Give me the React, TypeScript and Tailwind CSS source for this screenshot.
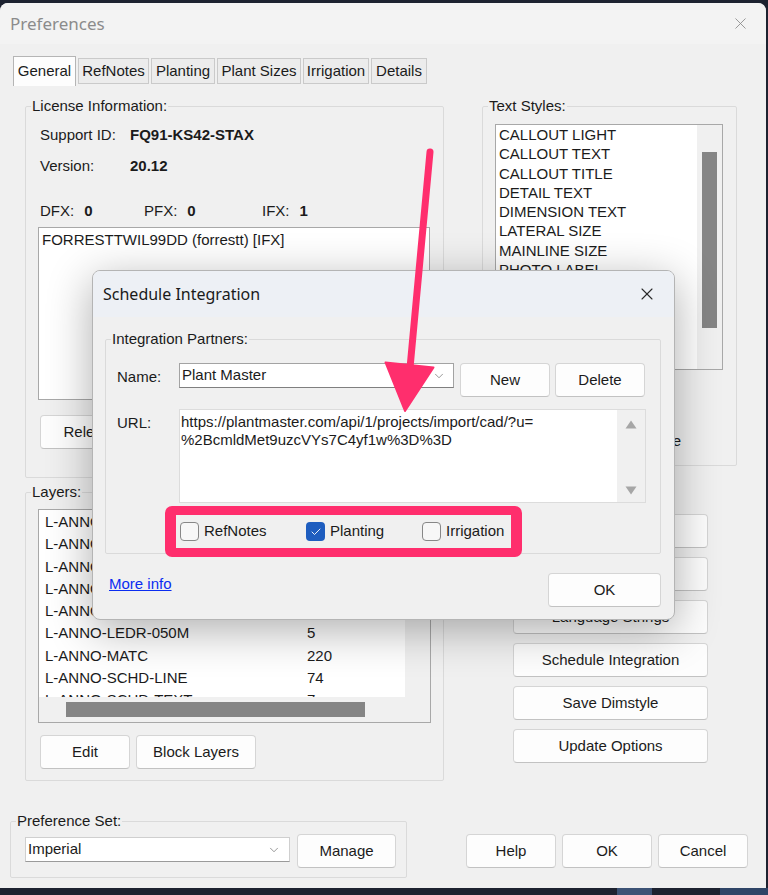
import { ChevronDown, X, Check } from "lucide-react";
import type { ReactNode } from "react";

// Windows-style preferences window with the "Schedule Integration" dialog on top

const Btn = ({ children, className = "" }: { children: ReactNode; className?: string }) => (
  <div
    className={`flex items-center justify-center h-[34px] rounded-[4px] border border-[#d5d5d5] border-b-[#c2c2c2] bg-[#fdfdfd] text-[15px] text-[#1b1b1b] ${className}`}
  >
    {children}
  </div>
);

const Group = ({ label, className = "", children }: { label: string; className?: string; children?: ReactNode }) => (
  <fieldset className={`border border-[#dadada] rounded-[2px] ${className}`}>
    <legend className="ml-[5px] px-[1px] text-[15px] leading-[18px] text-[#1b1b1b]">{label}</legend>
    {children}
  </fieldset>
);

const tabs = [
  { name: "General", w: "w-[63px]", active: true },
  { name: "RefNotes", w: "w-[71px]" },
  { name: "Planting", w: "w-[64px]" },
  { name: "Plant Sizes", w: "w-[84px]" },
  { name: "Irrigation", w: "w-[66px]" },
  { name: "Details", w: "w-[56px]" },
];

const textStyles = [
  "CALLOUT LIGHT",
  "CALLOUT TEXT",
  "CALLOUT TITLE",
  "DETAIL TEXT",
  "DIMENSION TEXT",
  "LATERAL SIZE",
  "MAINLINE SIZE",
  "PHOTO LABEL",
  "PLANT LABEL",
  "ROOM TITLE",
  "SHEET TITLE",
  "STANDARD",
];

const layers = [
  ["L-ANNO-DIMS", "12"],
  ["L-ANNO-IDEN", "3"],
  ["L-ANNO-KEYN", "41"],
  ["L-ANNO-LEDR", "18"],
  ["L-ANNO-LEDR-025M", "9"],
  ["L-ANNO-LEDR-050M", "5"],
  ["L-ANNO-MATC", "220"],
  ["L-ANNO-SCHD-LINE", "74"],
  ["L-ANNO-SCHD-TEXT", "7"],
];

const rightButtons = [
  "Update Text Styles",
  "Load Defaults",
  "Language Strings",
  "Schedule Integration",
  "Save Dimstyle",
  "Update Options",
];

const CheckBox = ({ checked }: { checked?: boolean }) =>
  checked ? (
    <div className="w-[19px] h-[19px] rounded-[4px] bg-[#1e5dbf] flex items-center justify-center">
      <Check size={12} strokeWidth={1.8} color="#ffffff" />
    </div>
  ) : (
    <div className="w-[19px] h-[19px] rounded-[4px] border border-[#878787] bg-[#f7f7f7]" />
  );

const ScheduleDialog = () => (
  <div className="absolute left-[92px] top-[270px] w-[583px] h-[350px] rounded-[8px] border border-[#b4b4b4] bg-[#f0f0f0] shadow-[0_10px_45px_rgba(0,0,0,0.32)] flex flex-col overflow-hidden">
    <div className="h-[46px] shrink-0 bg-[#edf0f5] flex items-center justify-between pl-[10px] pr-[17px]">
      <span className="font-['Noto_Sans',sans-serif] text-[16px] text-[#1a1a1a]">Schedule Integration</span>
      <X size={20} strokeWidth={1.3} color="#2a2a2a" />
    </div>

    <Group label="Integration Partners:" className="ml-[12px] mt-[13px] w-[556px] h-[224px] shrink-0">
      <div className="pl-[11px]">
        <div className="flex items-start mt-[15px]">
          <span className="w-[62px] mt-[5px] leading-[18px] text-[15px]">Name:</span>
          <div className="w-[275px] h-[25px] bg-white border border-[#a3a3a3] border-b-[#7f7f7f] flex items-center justify-between pl-[2px] pr-[7px] text-[15px]">
            <span>Plant Master</span>
            <ChevronDown size={14} strokeWidth={1.2} color="#6d6d6d" />
          </div>
          <Btn className="w-[90px] ml-[6px]">New</Btn>
          <Btn className="w-[90px] ml-[5px]">Delete</Btn>
        </div>

        <div className="flex items-start mt-[12px]">
          <span className="w-[62px] mt-[5px] leading-[18px] text-[15px]">URL:</span>
          <div className="w-[467px] h-[94px] bg-white border border-[#dcdcdc] flex">
            <div className="flex-1 pl-[1px] pt-[3px] text-[15px] leading-[18px] whitespace-nowrap">
              <div>https://plantmaster.com/api/1/projects/import/cad/?u=</div>
              <div>%2BcmldMet9uzcVYs7C4yf1w%3D%3D</div>
            </div>
            <div className="w-[28px] bg-[#f0f0f0] flex flex-col items-center justify-between pt-[10px] pb-[7px]">
              <svg width="12" height="9" viewBox="0 0 12 9">
                <polygon points="6,0.5 11.5,8.5 0.5,8.5" fill="#a6a6a6" />
              </svg>
              <svg width="12" height="9" viewBox="0 0 12 9">
                <polygon points="0.5,0.5 11.5,0.5 6,8.5" fill="#a6a6a6" />
              </svg>
            </div>
          </div>
        </div>

        <div className="flex items-center ml-[63px] mt-[19px] h-[19px] text-[15px]">
          <div className="w-[126px] flex items-center gap-[5px]">
            <CheckBox />
            <span>RefNotes</span>
          </div>
          <div className="w-[116px] flex items-center gap-[5px]">
            <CheckBox checked />
            <span>Planting</span>
          </div>
          <div className="flex items-center gap-[5px]">
            <CheckBox />
            <span>Irrigation</span>
          </div>
        </div>
      </div>
    </Group>

    <div className="flex items-start justify-between mt-[19px] pl-[16px] pr-[13px]">
      <span className="mt-[2px] leading-[18px] text-[15px] text-[#0a2cf0] underline">More info</span>
      <Btn className="w-[113px]">OK</Btn>
    </div>

    {/* annotation frame */}
    <div className="absolute left-[72px] top-[235px] w-[357px] h-[51px] rounded-[7px] border-x-[11px] border-y-[9px] border-[#ff2e6d]" />
  </div>
);

export default function App() {
  return (
    <div className="relative w-[768px] h-[895px] overflow-hidden bg-[#1d2230] font-['Liberation_Sans',Arial,sans-serif] text-[#1b1b1b]">
      <div className="w-[766px] h-[885px] mt-[3px] rounded-t-[8px] bg-[#f0f0f0] flex flex-col overflow-hidden">
        {/* title bar */}
        <div className="h-[41px] shrink-0 bg-[#f3f3f3] flex items-center justify-between pl-[10px] pr-[16px]">
          <span className="font-['Noto_Sans',sans-serif] text-[17px] text-[#8b8b8b] mt-[1px]">Preferences</span>
          <X size={19} strokeWidth={1.1} color="#8a8a8a" />
        </div>

        {/* tabs */}
        <div className="flex items-start gap-[2px] ml-[13px] mt-[12px] h-[30px] text-[15px]">
          {tabs.map((t) =>
            t.active ? (
              <div key={t.name} className={`${t.w} h-[30px] bg-[#fdfdfd] border border-b-0 border-[#b5b5b5] flex items-center justify-center`}>
                {t.name}
              </div>
            ) : (
              <div key={t.name} className={`${t.w} h-[26px] mt-[2px] bg-[#ececec] border border-[#cacaca] flex items-center justify-center`}>
                {t.name}
              </div>
            )
          )}
        </div>

        {/* main columns */}
        <div className="flex mt-[11px] h-[684px] text-[15px]">
          <div className="ml-[25px] w-[419px] flex flex-col">
            <Group label="License Information:" className="h-[381px] shrink-0">
              <div className="pl-[14px]">
                <div className="flex mt-[11px] leading-[18px]">
                  <span className="w-[90px]">Support ID:</span>
                  <span className="font-bold">FQ91-KS42-STAX</span>
                </div>
                <div className="flex mt-[13px] leading-[18px]">
                  <span className="w-[90px]">Version:</span>
                  <span className="font-bold">20.12</span>
                </div>
                <div className="flex mt-[27px] leading-[18px]">
                  <span className="w-[104px]">
                    DFX:<span className="font-bold ml-[10px]">0</span>
                  </span>
                  <span className="w-[118px]">
                    PFX:<span className="font-bold ml-[10px]">0</span>
                  </span>
                  <span>
                    IFX:<span className="font-bold ml-[10px]">1</span>
                  </span>
                </div>
                <div className="ml-[-2px] mt-[7px] w-[392px] h-[173px] bg-white border border-[#a8a8a8] pl-[3px] pt-[3px] leading-[18px]">
                  FORRESTTWIL99DD (forrestt) [IFX]
                </div>
                <Btn className="w-[102px] mt-[15px]">Release</Btn>
              </div>
            </Group>

            <Group label="Layers:" className="mt-[5px] h-[298px] shrink-0">
              <div className="pl-[14px]">
                <div className="ml-[-2px] mt-[8px] w-[393px] h-[214px] border border-[#a8a8a8] flex flex-col">
                  <div className="flex h-[187px]">
                    <div className="w-[366px] bg-white overflow-hidden pt-[1px]">
                      {layers.map(([n, c]) => (
                        <div key={n} className="grid grid-cols-[262px_1fr] pl-[6px] leading-[22.3px]">
                          <span>{n}</span>
                          <span>{c}</span>
                        </div>
                      ))}
                    </div>
                    <div className="flex-1 bg-[#f0f0f0]" />
                  </div>
                  <div className="flex-1 bg-[#f0f0f0] pl-[27px] pt-[5px]">
                    <div className="w-[299px] h-[15px] bg-[#858585]" />
                  </div>
                </div>
                <div className="flex gap-[6px] mt-[12px]">
                  <Btn className="w-[90px]">Edit</Btn>
                  <Btn className="w-[120px]">Block Layers</Btn>
                </div>
              </div>
            </Group>
          </div>

          <div className="ml-[38px] w-[255px] flex flex-col">
            <Group label="Text Styles:" className="h-[369px] shrink-0">
              <div className="ml-[12px] mt-[9px] w-[228px] h-[246px] border border-[#a8a8a8] flex">
                <div className="w-[201px] bg-white overflow-hidden pl-[3px]">
                  {textStyles.map((s) => (
                    <div key={s} className="leading-[19.3px]">
                      {s}
                    </div>
                  ))}
                </div>
                <div className="flex-1 bg-[#f0f0f0] pl-[5px] pt-[27px]">
                  <div className="w-[15px] h-[176px] bg-[#858585]" />
                </div>
              </div>
              <div className="ml-[12px] mt-[62px] w-[186px] text-right leading-[18px]">Set Current Style</div>
            </Group>

            <div className="flex flex-col gap-[9px] ml-[31px] mt-[48px] w-[195px]">
              {rightButtons.map((b) => (
                <Btn key={b}>{b}</Btn>
              ))}
            </div>
          </div>
        </div>

        {/* bottom row */}
        <div className="flex items-start mt-[31px] text-[15px]">
          <Group label="Preference Set:" className="ml-[10px] w-[397px] h-[66px] shrink-0">
            <div className="flex items-start pl-[14px]">
              <div className="w-[265px] h-[25px] mt-[7px] bg-white border border-[#cfcfcf] border-b-[#9a9a9a] flex items-center justify-between pl-[2px] pr-[8px]">
                <span>Imperial</span>
                <ChevronDown size={14} strokeWidth={1.2} color="#6d6d6d" />
              </div>
              <Btn className="w-[99px] ml-[7px] mt-[4px]">Manage</Btn>
            </div>
          </Group>
          <div className="flex gap-[6px] ml-auto mr-[18px] mt-[22px]">
            <Btn className="w-[90px]">Help</Btn>
            <Btn className="w-[90px]">OK</Btn>
            <Btn className="w-[90px]">Cancel</Btn>
          </div>
        </div>
      </div>

      {/* taskbar strip */}
      <div className="flex h-[7px]">
        <div className="ml-[617px] w-[35px] bg-[#3c5275]" />
        <div className="ml-[68px] w-[48px] bg-[#2f4567]" />
      </div>

      <ScheduleDialog />

      {/* annotation arrow */}
      <svg className="absolute inset-0 pointer-events-none" width="768" height="895" viewBox="0 0 768 895">
        <line x1="430" y1="152" x2="410" y2="368" stroke="#ff2e6d" strokeWidth="7" strokeLinecap="round" />
        <polygon
          points="385.5,362.5 433.5,367.5 405,411"
          fill="#ff2e6d"
          stroke="#ff2e6d"
          strokeWidth="2"
          strokeLinejoin="round"
        />
      </svg>
    </div>
  );
}
